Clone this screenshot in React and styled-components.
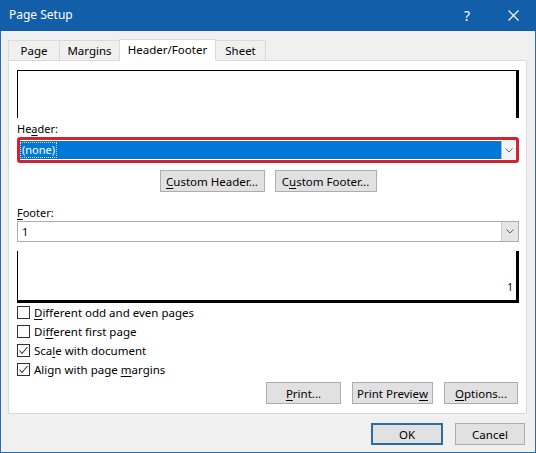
import styled, { createGlobalStyle } from "styled-components";

const GlobalStyle = createGlobalStyle`
  html, body {
    margin: 0;
    padding: 0;
    background: #ffffff;
  }
  body {
    font-family: "Noto Sans", "Open Sans", sans-serif;
    font-size: 11px;
    color: #000000;
  }
  * {
    box-sizing: border-box;
  }
`;

const Window = styled.div`
  width: 536px;
  height: 453px;
  display: flex;
  flex-direction: column;
  background: #f0f0f0;
  border: 1px solid #2a6cb2;
  border-top: none;
`;

const TitleBar = styled.div`
  height: 31px;
  margin: 0 -1px;
  background: #135ea9;
  display: flex;
  align-items: center;
  padding-left: 9px;
  color: #ffffff;
  flex-shrink: 0;
`;

const Title = styled.div`
  flex: 1;
  font-size: 12px;
  padding-bottom: 2px;
`;

const TitleControl = styled.div`
  width: ${(p) => p.$w}px;
  height: 31px;
  display: flex;
  align-items: center;
  justify-content: center;
  font-size: 14px;
  color: #ffffff;
`;

const Body = styled.div`
  flex: 1;
  display: flex;
  flex-direction: column;
  padding: 7px 8px 0 7px;
`;

const TabStrip = styled.div`
  display: flex;
  align-items: flex-end;
  height: 22px;
  padding-left: 1px;
  position: relative;
  z-index: 1;
`;

const Tab = styled.div`
  width: ${(p) => p.$w}px;
  height: ${(p) => (p.$active ? 22 : 20)}px;
  margin-left: -1px;
  display: flex;
  align-items: center;
  justify-content: center;
  padding-bottom: ${(p) => (p.$active ? 2 : 0)}px;
  background: ${(p) => (p.$active ? "#ffffff" : "#f0f0f0")};
  border: 1px solid #d9d9d9;
  border-bottom: ${(p) => (p.$active ? "1px solid #ffffff" : "none")};
  margin-bottom: ${(p) => (p.$active ? -1 : 0)}px;
  font-size: 11.5px;
`;

const Panel = styled.div`
  height: 354px;
  background: #ffffff;
  border: 1px solid #d9d9d9;
  display: flex;
  flex-direction: column;
  padding: 9px 7px 9px 8px;
`;

const PreviewTop = styled.div`
  height: 48px;
  border-top: 1px solid #000000;
  border-left: 1px solid #000000;
  border-right: 3px solid #000000;
`;

const PreviewBottom = styled.div`
  height: 52px;
  margin-top: 9px;
  border-left: 1px solid #000000;
  border-right: 3px solid #000000;
  border-bottom: 3px solid #000000;
  display: flex;
  align-items: flex-end;
  justify-content: flex-end;
  padding: 0 3px 6px 0;
  font-size: 10px;
  color: #000000;
`;

const Label = styled.div`
  height: 16px;
  line-height: 16px;
  margin-top: ${(p) => p.$top || 0}px;
`;

const Key = styled.span`
  text-decoration: underline;
  text-underline-offset: 2px;
`;

const Highlight = styled.div`
  height: 26px;
  border: 3px solid #d2232f;
  border-radius: 3px;
  display: flex;
  padding: 1px 1px 1px 0;
  background: #ffffff;
`;

const SelectedValue = styled.div`
  flex: 1;
  background: #0078d7;
  color: #ffffff;
  display: flex;
  align-items: center;
  padding-left: 1px;
`;

const FocusText = styled.span`
  outline: 1px dotted #c8dcf0;
  line-height: 14px;
  padding: 0 1px;
`;

const Combo = styled.div`
  height: 21px;
  border: 1px solid #adadad;
  background: #ffffff;
  display: flex;
  align-items: stretch;
`;

const ComboValue = styled.div`
  flex: 1;
  display: flex;
  align-items: center;
  padding-left: 4px;
`;

const ArrowButton = styled.div`
  width: ${(p) => p.$w}px;
  display: flex;
  align-items: center;
  justify-content: center;
  background: ${(p) => p.$bg};
  border-left: 1px solid ${(p) => p.$line};
`;

const CenterRow = styled.div`
  display: flex;
  justify-content: center;
  gap: 10px;
  margin-top: 7px;
`;

const Button = styled.div`
  width: ${(p) => p.$w}px;
  height: 22px;
  display: flex;
  align-items: center;
  justify-content: center;
  background: #e1e1e1;
  border: ${(p) => (p.$default ? "2px solid #2b6ca4" : "1px solid #adadad")};
  white-space: nowrap;
  font-size: 11.5px;
`;

const CheckList = styled.div`
  display: flex;
  flex-direction: column;
`;

const CheckRow = styled.div`
  height: 19px;
  display: flex;
  align-items: center;
  gap: 4px;
  font-size: 11.5px;
`;

const Box = styled.div`
  width: 13px;
  height: 13px;
  border: 1px solid #333333;
  background: #ffffff;
  display: flex;
  align-items: center;
  justify-content: center;
`;

const PanelButtons = styled.div`
  margin-top: auto;
  display: flex;
  justify-content: flex-end;
  gap: 11px;
  padding-right: 1px;
`;

const DialogButtons = styled.div`
  display: flex;
  justify-content: flex-end;
  gap: 12px;
  margin-top: 9px;
  padding-right: 2px;
`;

const Chevron = () => (
  <svg width="8" height="5" viewBox="0 0 8 5">
    <polyline points="0.5,0.5 4,4 7.5,0.5" fill="none" stroke="#606060" strokeWidth="1" />
  </svg>
);

const Check = ({ checked }) => (
  <Box>
    {checked && (
      <svg width="11" height="11" viewBox="0 0 11 11">
        <polyline points="1.5,5.5 4,8.5 9.5,2" fill="none" stroke="#333333" strokeWidth="1.1" />
      </svg>
    )}
  </Box>
);

const CloseIcon = () => (
  <svg width="11" height="11" viewBox="0 0 11 11">
    <line x1="0.5" y1="0.5" x2="10.5" y2="10.5" stroke="#ffffff" strokeWidth="1.1" />
    <line x1="10.5" y1="0.5" x2="0.5" y2="10.5" stroke="#ffffff" strokeWidth="1.1" />
  </svg>
);

const tabs = [
  { name: "Page", w: 52 },
  { name: "Margins", w: 61 },
  { name: "Header/Footer", w: 97, active: true },
  { name: "Sheet", w: 51 },
];

const options = [
  { label: <><Key>D</Key>ifferent odd and even pages</>, checked: false },
  { label: <>Di<Key>f</Key>ferent first page</>, checked: false },
  { label: <>Sca<Key>l</Key>e with document</>, checked: true },
  { label: <>Align with page <Key>m</Key>argins</>, checked: true },
];

export default function App() {
  return (
    <>
      <GlobalStyle />
      <Window>
        <TitleBar>
          <Title>Page Setup</Title>
          <TitleControl $w={46}>?</TitleControl>
          <TitleControl $w={46}>
            <CloseIcon />
          </TitleControl>
        </TitleBar>
        <Body>
          <TabStrip>
            {tabs.map((t) => (
              <Tab key={t.name} $w={t.w} $active={t.active}>
                {t.name}
              </Tab>
            ))}
          </TabStrip>
          <Panel>
            <PreviewTop />
            <Label $top={3}>
              He<Key>a</Key>der:
            </Label>
            <Highlight>
              <SelectedValue>
                <FocusText>(none)</FocusText>
              </SelectedValue>
              <ArrowButton $w={14} $bg="#f3f3f3" $line="#b9b9b9">
                <Chevron />
              </ArrowButton>
            </Highlight>
            <CenterRow>
              <Button $w={105}>
                <Key>C</Key>ustom Header...
              </Button>
              <Button $w={102}>
                C<Key>u</Key>stom Footer...
              </Button>
            </CenterRow>
            <Label $top={13}>
              <Key>F</Key>ooter:
            </Label>
            <Combo>
              <ComboValue>1</ComboValue>
              <ArrowButton $w={17} $bg="#e5e5e5" $line="#cccccc">
                <Chevron />
              </ArrowButton>
            </Combo>
            <PreviewBottom>1</PreviewBottom>
            <CheckList>
              {options.map((o, i) => (
                <CheckRow key={i}>
                  <Check checked={o.checked} />
                  <span>{o.label}</span>
                </CheckRow>
              ))}
            </CheckList>
            <PanelButtons>
              <Button $w={75}>
                <Key>P</Key>rint...
              </Button>
              <Button $w={81}>
                Print Previe<Key>w</Key>
              </Button>
              <Button $w={74}>
                <Key>O</Key>ptions...
              </Button>
            </PanelButtons>
          </Panel>
          <DialogButtons>
            <Button $w={72} $default>
              OK
            </Button>
            <Button $w={70}>Cancel</Button>
          </DialogButtons>
        </Body>
      </Window>
    </>
  );
}
